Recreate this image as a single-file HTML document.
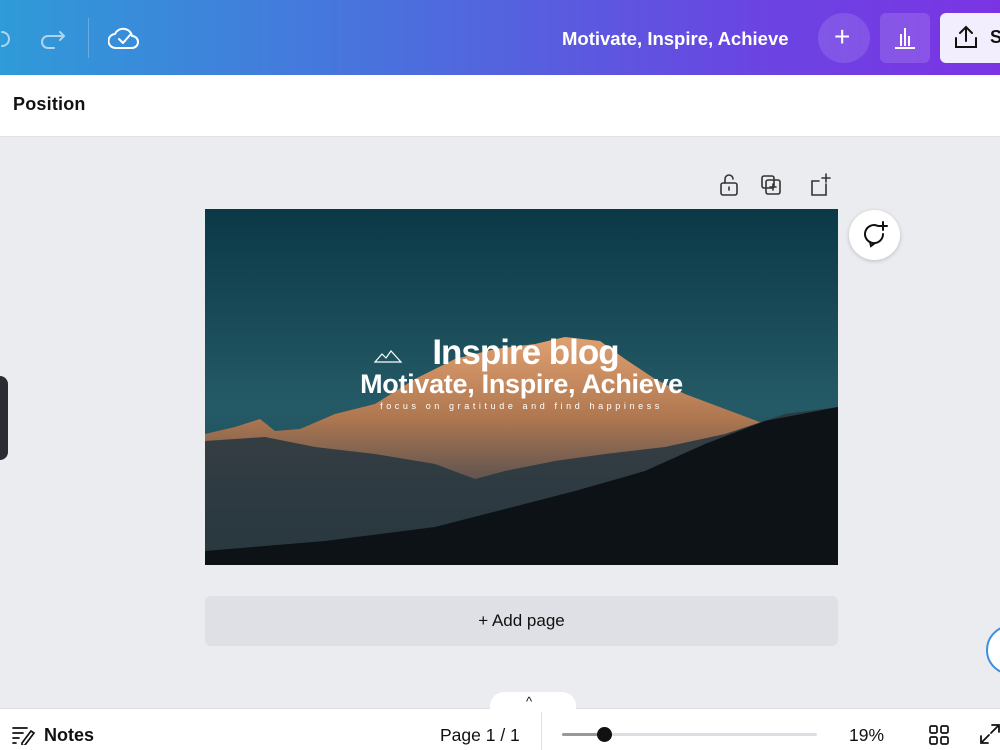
<!DOCTYPE html>
<html><head><meta charset="utf-8"><style>
*{margin:0;padding:0;box-sizing:border-box}
body{width:1000px;height:750px;overflow:hidden;background:#ebecf0;font-family:"Liberation Sans",sans-serif;position:relative}
.top{position:absolute;left:0;top:0;width:1000px;height:75px;background:linear-gradient(90deg,#2f9bd8 0%,#4b6fdd 40%,#6a45e2 75%,#7b34e4 100%)}
.sub{position:absolute;left:0;top:75px;width:1000px;height:62px;background:#fff;border-bottom:1px solid #e0e0e5}
.abs{position:absolute}
</style></head><body>
<div class="top">
  <svg class="abs" style="left:0;top:24px" width="150" height="30" fill="none" stroke="rgba(255,255,255,.6)" stroke-width="2" stroke-linecap="round">
    <path d="M2 8 A7 7 0 0 1 2 22"/>
    <path d="M60 8 l4 4 -4 4 M64 12 H48 a6 6 0 0 0 0 12 h6"/>
  </svg>
  <div class="abs" style="left:88px;top:18px;width:1px;height:40px;background:rgba(255,255,255,.25)"></div>
  <svg class="abs" style="left:108px;top:24px" width="32" height="28" fill="none" stroke="#fff" stroke-width="2" stroke-linecap="round" stroke-linejoin="round">
    <path d="M8 24 h16 a6 6 0 0 0 0-12 a9 9 0 0 0-17-2 a7 7 0 0 0 1 14z"/><path d="M11 15 l4 4 7-8"/>
  </svg>
  <div class="abs" style="left:562px;top:28px;color:#fff;font-size:18.5px;font-weight:bold">Motivate, Inspire, Achieve</div>
  <div class="abs" style="left:818px;top:13px;width:52px;height:50px;border-radius:50%;background:rgba(255,255,255,.12)"></div>
  <div class="abs" style="left:834px;top:22px;color:#fff;font-size:28px;line-height:30px">+</div>
  <div class="abs" style="left:880px;top:13px;width:50px;height:50px;border-radius:6px;background:rgba(255,255,255,.14)"></div>
  <svg class="abs" style="left:893px;top:26px" width="24" height="24" stroke="#fff" stroke-width="2"><path d="M2 22H22M8 20V8M12 20V2M16 20V10"/></svg>
  <div class="abs" style="left:940px;top:13px;width:70px;height:50px;border-radius:6px;background:#f3eefe"></div>
  <svg class="abs" style="left:953px;top:24px" width="26" height="26" fill="none" stroke="#111" stroke-width="2" stroke-linecap="round"><path d="M13 3V17M7 9l6-6 6 6M3 14v9h20v-9"/></svg>
  <div class="abs" style="left:990px;top:27px;font-size:18px;font-weight:bold;color:#111">S</div>
</div>
<div class="sub"><div class="abs" style="left:13px;top:19px;font-size:18px;font-weight:bold;color:#111;letter-spacing:.2px">Position</div></div>

<svg class="abs" style="left:716px;top:172px" width="120" height="28" fill="none" stroke="#333" stroke-width="1.6" stroke-linecap="round">
  <rect x="5" y="11" width="16" height="12" rx="2"/><path d="M9 11V7a4 4 0 0 1 8 0"/><path d="M13 15v3"/>
  <rect x="50" y="8" width="14" height="14" rx="2"/><rect x="46" y="4" width="12" height="12" rx="2"/><path d="M57 12v6M54 15h6"/>
  <path d="M110 12v11H96V9h7"/><path d="M110 2v8M106 6h8"/>
</svg>

<svg class="abs" style="left:205px;top:209px" width="633" height="356" viewBox="0 0 633 356">
  <defs>
    <linearGradient id="sky" x1="0" y1="0" x2="0" y2="1"><stop offset="0" stop-color="#0b3846"/><stop offset=".55" stop-color="#245a66"/><stop offset="1" stop-color="#1b4550"/></linearGradient>
    <linearGradient id="mt" x1="0" y1="0" x2="0" y2="1"><stop offset="0" stop-color="#e0a070"/><stop offset=".35" stop-color="#b07850"/><stop offset=".7" stop-color="#4a4a50"/><stop offset="1" stop-color="#1f2a33"/></linearGradient>
  </defs>
  <rect width="633" height="356" fill="url(#sky)"/>
  <path d="M0 225 L30 218 L55 210 L70 222 L95 220 L130 205 L170 195 L210 170 L250 150 L290 140 L330 135 L360 128 L395 132 L420 150 L450 170 L480 185 L520 200 L560 215 L600 212 L633 205 V356 H0Z" fill="url(#mt)"/>
  <path d="M0 232 L60 228 L110 238 L170 245 L230 255 L270 270 L300 262 L350 252 L400 245 L460 238 L520 225 L580 205 L633 198 V356 H0Z" fill="#2a3840" opacity=".9"/>
  <path d="M0 342 L120 332 L230 318 L300 300 L370 282 L440 262 L500 235 L560 212 L633 198 V356 H0Z" fill="#0c1216"/>
  <path d="M170 153 l7-8 4 4 5-7 10 11 z" fill="none" stroke="#fff" stroke-width="1.2"/>
</svg>
<div class="abs" style="left:205px;top:333px;width:633px;text-align:center;color:#fff;font-weight:bold">
  <div style="font-size:35px;line-height:40px;letter-spacing:-1px;padding-left:8px">Inspire blog</div>
  <div style="font-size:27px;line-height:30px;margin-top:-4px;letter-spacing:-.3px">Motivate, Inspire, Achieve</div>
  <div style="font-size:9px;letter-spacing:3.6px;font-weight:normal;margin-top:2px">focus on gratitude and find happiness</div>
</div>

<div class="abs" style="left:849px;top:210px;width:51px;height:50px;border-radius:50%;background:#fff;box-shadow:0 1px 4px rgba(0,0,0,.2)"></div>
<svg class="abs" style="left:860px;top:220px" width="30" height="30" fill="none" stroke="#111" stroke-width="2" stroke-linecap="round"><path d="M18 6a9 9 0 1 0 5 8"/><path d="M10 22l1 4 4-3"/><path d="M23 2v8M19 6h8"/></svg>

<div class="abs" style="left:0;top:376px;width:8px;height:84px;background:#2b2b33;border-radius:0 8px 8px 0"></div>

<div class="abs" style="left:205px;top:596px;width:633px;height:50px;background:#dfe0e5;border-radius:6px;text-align:center;line-height:50px;font-size:17px;color:#111">+ Add page</div>

<div class="abs" style="left:986px;top:625px;width:50px;height:50px;border-radius:50%;background:#fff;border:2px solid #3d8fe0"></div>

<div class="abs" style="left:0;top:708px;width:1000px;height:42px;background:#fff;border-top:1px solid #e0e0e5"></div>
<div class="abs" style="left:490px;top:692px;width:86px;height:18px;background:#fff;border-radius:14px 14px 0 0"></div>
<div class="abs" style="left:526px;top:694px;font-size:13px;color:#111">^</div>
<svg class="abs" style="left:12px;top:725px" width="24" height="20" fill="none" stroke="#111" stroke-width="1.7" stroke-linecap="round"><path d="M1 3h14M1 8h10M1 13h6M1 18h3M10 18l9-12 3 2-9 12-3 1z"/></svg>
<div class="abs" style="left:44px;top:725px;font-size:18px;color:#111;font-weight:bold">Notes</div>
<div class="abs" style="left:440px;top:725px;font-size:17.5px;color:#111">Page 1 / 1</div>
<div class="abs" style="left:541px;top:712px;width:1px;height:38px;background:#e0e0e5"></div>
<div class="abs" style="left:562px;top:733px;width:255px;height:3px;background:#dcdde2;border-radius:2px"></div>
<div class="abs" style="left:562px;top:733px;width:42px;height:3px;background:#999;border-radius:2px"></div>
<div class="abs" style="left:597px;top:727px;width:15px;height:15px;border-radius:50%;background:#111"></div>
<div class="abs" style="left:849px;top:725px;font-size:17.5px;color:#111">19%</div>
<svg class="abs" style="left:928px;top:724px" width="22" height="22" fill="none" stroke="#111" stroke-width="1.7"><rect x="2" y="2" width="7" height="7" rx="1.5"/><rect x="13" y="2" width="7" height="7" rx="1.5"/><rect x="2" y="13" width="7" height="7" rx="1.5"/><rect x="13" y="13" width="7" height="7" rx="1.5"/></svg>
<svg class="abs" style="left:978px;top:722px" width="24" height="24" fill="none" stroke="#111" stroke-width="1.8" stroke-linecap="round"><path d="M3 21l8-8M3 14v7h7M21 3l-8 8M14 3h7v7"/></svg>
</body></html>
